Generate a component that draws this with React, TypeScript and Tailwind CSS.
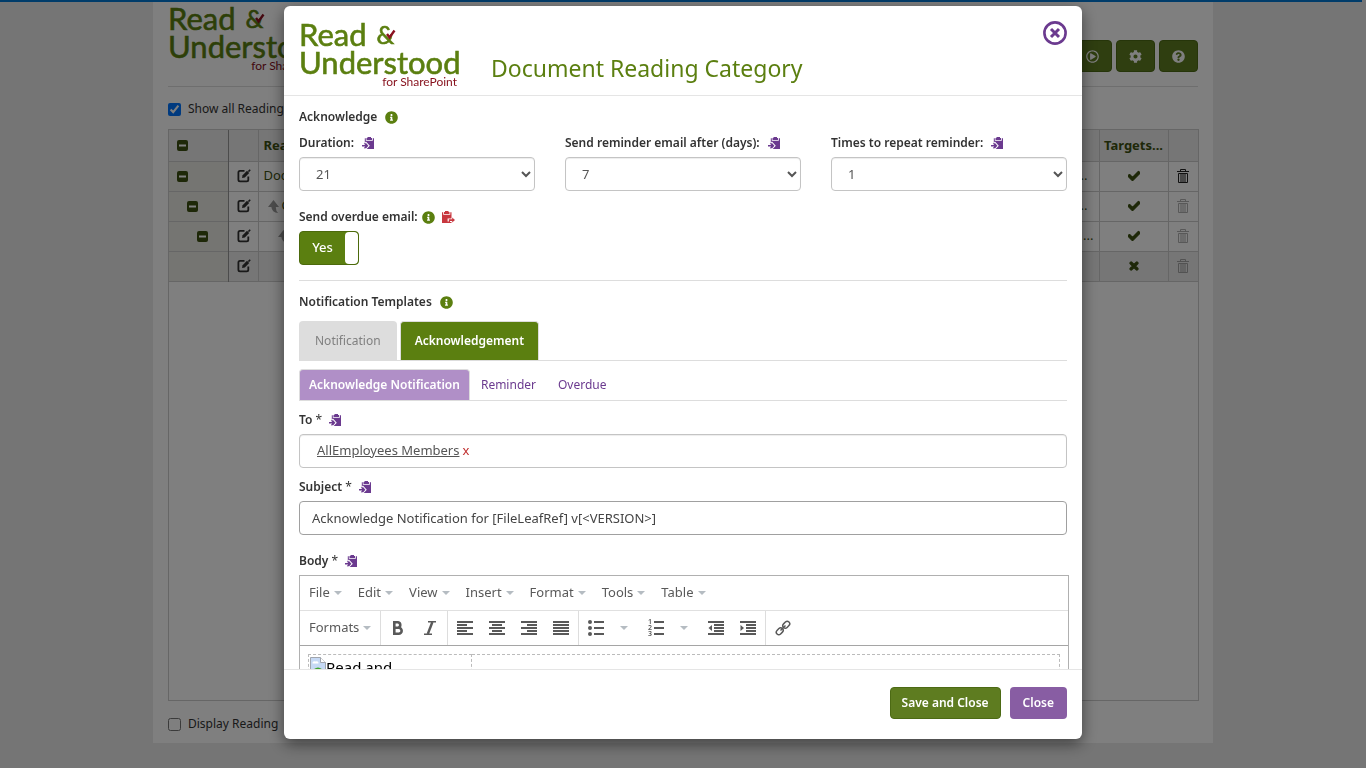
import { useState } from "react";
import type { ReactNode } from "react";
import {
  FaCheck,
  FaCog,
  FaInfoCircle,
  FaQuestionCircle,
  FaRegPlayCircle,
  FaTimes,
} from "react-icons/fa";

type Row = {
  id: number;
  indent: string;
  name: string;
  more: string;
  expand: boolean;
  targets: boolean;
  canDelete: boolean;
};

const rows: Row[] = [
  { id: 1, indent: "pl-2", name: "Document", more: "...", expand: true, targets: true, canDelete: true },
  { id: 2, indent: "pl-[18px]", name: "C", more: "...", expand: true, targets: true, canDelete: false },
  { id: 3, indent: "pl-7", name: "", more: "...", expand: true, targets: true, canDelete: false },
  { id: 4, indent: "pl-2", name: "", more: "", expand: false, targets: false, canDelete: false },
];

const menus = ["File", "Edit", "View", "Insert", "Format", "Tools", "Table"];

const Logo = () => (
  <div className="relative h-[72px] w-[162px] shrink-0 pt-0.5 font-[Lato,sans-serif] text-[#5b7f10]">
    <div className="text-[31px] leading-7 font-normal [-webkit-text-stroke:0.6px_currentColor]">
      <div className="flex gap-2.5">
        <span>Read</span>
        <span className="relative text-[25px]">
          &amp;
          <svg className="absolute top-2 left-2 h-3 w-3" viewBox="0 0 12 12">
            <path d="M2 6l2.500 3.500 5-7" fill="none" stroke="#8b1020" strokeWidth="2.4" />
          </svg>
        </span>
      </div>
      <div>Understood</div>
    </div>
    <div className="absolute right-1 bottom-0.5 text-[12px] leading-3 font-normal text-[#86101c]">for SharePoint</div>
  </div>
);

const InfoIcon = () => <FaInfoCircle className="h-[13px] w-[13px] text-[#5b7f10]" />;

const PasteIcon = () => (
  <svg className="h-3 w-3" viewBox="0 0 12 12" fill="#6b3a8f">
    <path d="M5.500 0h3.500v1h1v2H4.500V1h1z" />
    <path d="M2.800 1.200h1v2.500h7V1.200H12V12H2.800z" />
    <path d="M-.5 8.700h5M3 5.500l3 3.200-3 3.200" fill="none" stroke="#fff" strokeWidth="2.600" />
    <path d="M0 8h3.200L1.800 6.200h2.400l2.200 2.500-2.200 2.500H1.800l1.400-1.800H0z" />
  </svg>
);

const CopyIcon = () => (
  <svg className="h-3 w-[13px]" viewBox="0 0 13 12" fill="#c8373f">
    <path d="M3 0h3.500v1h1v2H2V1h1z" />
    <path d="M0 1.200h1.200v2.500h7.100V1.200h1.200V12H0z" />
    <path d="M7.400 10.500V9.300h4" fill="none" stroke="#fff" strokeWidth="3.600" />
    <path d="M6.800 8.300h3.400V6.600L13 9.100l-2.800 2.500V9.900H8v1H6.800z" />
  </svg>
);

const EditIcon = () => (
  <svg className="h-3.5 w-3.5" viewBox="0 0 14 14" fill="none" stroke="#333" strokeWidth="1.8">
    <path d="M7.5 1.9H3Q1.4 1.9 1.4 3.5v7.2Q1.4 12.3 3 12.3h6.7q1.6 0 1.6-1.6V7.4" />
    <path d="M5 9l.6-2.800L10 1.800l2.200 2.200L7.800 8.400z" fill="#333" stroke="none" />
    <path d="M11.400 2.600l1.800-1.800" strokeWidth="1.600" />
  </svg>
);

const MinusIcon = () => (
  <svg className="h-[11px] w-[11px]" viewBox="0 0 11 11">
    <rect width="11" height="11" rx="2" fill="#3c5010" />
    <rect x="2" y="4.5" width="7" height="2" fill="#fff" />
  </svg>
);

const TrashIcon = ({ faded }: { faded: boolean }) => (
  <svg
    className={faded ? "h-3.5 w-3 opacity-35" : "h-3.5 w-3"}
    viewBox="0 0 12 14"
    fill="none"
    stroke="#222"
  >
    <path d="M0 2.5h12M3.500 2V.5h5V2M1.500 4.500v9h9v-9z" />
    <path d="M4 5v8M6 5v8M8 5v8" />
  </svg>
);

const UpIcon = () => (
  <svg className="h-[13px] w-[11px]" viewBox="0 0 11 13" fill="#999">
    <path d="M5.500 0L11 7H7.800q0 4 2.400 6Q3.800 12.500 3.400 7H0z" />
  </svg>
);

const Bars = ({ lines }: { lines: number[][] }) => (
  <>
    {lines.map(([x, y, w]) => (
      <rect key={y} x={x} y={y} width={w} height="2" />
    ))}
  </>
);

const ToolButton = ({ label, children }: { label: string; children: ReactNode }) => (
  <button aria-label={label} className="flex h-8 w-8 items-center justify-center text-[#595959]">
    {children}
  </button>
);

const ToolIcon = ({ children }: { children: ReactNode }) => (
  <svg className="h-3.5 w-4" viewBox="0 0 16 14" fill="currentColor">
    {children}
  </svg>
);

const Caret = () => (
  <svg className="h-1 w-2" viewBox="0 0 8 4" fill="#b5bcc2">
    <path d="M0 0h8L4 4z" />
  </svg>
);

const ListCaret = ({ label }: { label: string }) => (
  <button aria-label={label} className="flex h-8 w-6 items-center justify-center">
    <Caret />
  </button>
);

const SelectField = ({ id, label, value }: { id: string; label: string; value: string }) => (
  <div className="min-w-0 flex-1">
    <div className="flex h-5 items-center gap-2">
      <label htmlFor={id}>{label}</label>
      <PasteIcon />
    </div>
    <select
      id={id}
      defaultValue={value}
      className="mt-1 h-[34px] w-full rounded border border-[#c4c4c4] bg-white px-3 text-[13px] font-normal text-[#555] shadow-[inset_0_1px_1px_rgba(0,0,0,0.075)]"
    >
      <option>{value}</option>
    </select>
  </div>
);

const Required = ({ id, label }: { id: string; label: string }) => (
  <div className="flex h-5 items-center gap-[7px]">
    <label htmlFor={id}>
      {label} <span className="font-normal">*</span>
    </label>
    <PasteIcon />
  </div>
);

const Page = () => {
  const [showAll, setShowAll] = useState(true);

  return (
    <main className="mx-auto flex h-[741px] max-w-[1060px] flex-col bg-white px-[15px] text-[12px] text-[#333]">
      <header className="flex h-[85px] shrink-0 justify-between border-b border-[#ddd]">
        <Logo />
        <div className="mt-[38px] flex gap-1">
          {[
            { label: "Run", icon: <FaRegPlayCircle /> },
            { label: "Settings", icon: <FaCog /> },
            { label: "Help", icon: <FaQuestionCircle /> },
          ].map((item) => (
            <button
              key={item.label}
              aria-label={item.label}
              className="flex h-8 w-[39px] items-center justify-center rounded border border-[#4c6a14] bg-[#5e7c20] text-[13px] text-white"
            >
              {item.icon}
            </button>
          ))}
        </div>
      </header>

      <label className="mt-3 flex h-5 items-center gap-[7px]">
        <input
          type="checkbox"
          className="h-[13px] w-[13px] accent-[#0075ff]"
          checked={showAll}
          onChange={(e) => setShowAll(e.target.checked)}
        />
        Show all Reading
      </label>

      {/* category grid */}
      <div className="mt-2.5 -mr-px min-h-0 flex-1 border border-[#ccc] text-[13px]">
        <table className="w-full table-fixed border-collapse">
          <colgroup>
            <col className="w-[59px]" />
            <col className="w-[30px]" />
            <col />
            <col className="w-[70px]" />
            <col className="w-[69px]" />
            <col className="w-[30px]" />
          </colgroup>
          <thead>
            <tr className="h-[31px] border-b border-[#ccc] bg-[#ededed] text-left text-[#3c5010]">
              <th className="border-r border-[#999] pl-2">
                <MinusIcon />
              </th>
              <th className="border-r border-[#ccc]" />
              <th className="pl-[5px]">Reading</th>
              <th className="border-r border-[#ccc]" />
              <th className="border-r border-[#ccc] text-center">Targets...</th>
              <th />
            </tr>
          </thead>
          <tbody>
            {rows.map((row) => (
              <tr
                key={row.id}
                className={
                  row.expand ? "h-[30px] border-b border-[#ccc]" : "h-[30px] border-b border-[#ccc] bg-[#ededed]"
                }
              >
                <td className={"border-r border-[#999] bg-[#ebebe4] " + row.indent}>
                  {row.expand && <MinusIcon />}
                </td>
                <td className="border-r border-[#ccc] pl-2">
                  <EditIcon />
                </td>
                <td className="pl-[5px] text-[#3c5010]">
                  <div className="flex items-center gap-[3px]">
                    {row.id === 2 && <span className="pl-1"><UpIcon /></span>}
                    {row.id === 3 && <span className="pl-3.5"><UpIcon /></span>}
                    {row.name}
                  </div>
                </td>
                <td
                  className={
                    row.id === 3
                      ? "border-r border-[#ccc] pr-[5px] text-right text-[#3c5010]"
                      : "border-r border-[#ccc] pr-[11px] text-right text-[#3c5010]"
                  }
                >
                  {row.more}
                </td>
                <td className="border-r border-[#ccc] text-[#3c5010]">
                  <div className="flex justify-center text-[12px] *:stroke-current *:stroke-50">
                    {row.targets ? <FaCheck /> : <FaTimes />}
                  </div>
                </td>
                <td>
                  <div className="flex justify-center">
                    <TrashIcon faded={!row.canDelete} />
                  </div>
                </td>
              </tr>
            ))}
          </tbody>
        </table>
      </div>

      <label className="mt-[13px] mb-[9px] flex h-5 items-center gap-[7px]">
        <input type="checkbox" className="h-[13px] w-[13px]" />
        Display Reading
      </label>
    </main>
  );
};

const Editor = () => (
  <div className="mt-1 -mr-0.5 border border-[#b0b0b0] text-[13px] font-normal text-[#595959]">
    <div className="flex h-[35px] items-center gap-4 border-b border-[#e0e0e0] pl-[9px]">
      {menus.map((menu) => (
        <button key={menu} className="flex items-center gap-1">
          {menu}
          <Caret />
        </button>
      ))}
    </div>
    <div className="flex h-[35px] items-stretch border-b border-[#a5a5a5] *:flex *:items-center *:border-r *:border-[#ddd]">
      <div className="pr-[9px] pl-[9px]">
        <button className="flex items-center gap-1">
          Formats
          <Caret />
        </button>
      </div>
      <div className="px-px">
        <ToolButton label="Bold">
          <svg className="h-3.5 w-3" viewBox="0 0 12 14" fill="none" stroke="currentColor" strokeWidth="2.6">
            <path d="M2.3 1.3H6a2.8 2.8 0 0 1 0 5.5H2.3zM2.3 6.8h4.4a2.9 2.9 0 0 1 0 5.9H2.3z" />
          </svg>
        </ToolButton>
        <ToolButton label="Italic">
          <svg className="h-3.5 w-3" viewBox="0 0 12 14" fill="none" stroke="currentColor">
            <path d="M4 .8h8M0 13.2h8" strokeWidth="1.4" />
            <path d="M8.4 1L3.8 13" strokeWidth="2.4" />
          </svg>
        </ToolButton>
      </div>
      <div className="px-px">
        <ToolButton label="Align left">
          <ToolIcon><Bars lines={[[0, 0, 16], [0, 3, 10], [0, 6, 16], [0, 9, 10], [0, 12, 16]]} /></ToolIcon>
        </ToolButton>
        <ToolButton label="Align center">
          <ToolIcon><Bars lines={[[0, 0, 16], [3, 3, 10], [0, 6, 16], [3, 9, 10], [0, 12, 16]]} /></ToolIcon>
        </ToolButton>
        <ToolButton label="Align right">
          <ToolIcon><Bars lines={[[0, 0, 16], [6, 3, 10], [0, 6, 16], [6, 9, 10], [0, 12, 16]]} /></ToolIcon>
        </ToolButton>
        <ToolButton label="Justify">
          <ToolIcon><Bars lines={[[0, 0, 16], [0, 3, 16], [0, 6, 16], [0, 9, 16], [0, 12, 16]]} /></ToolIcon>
        </ToolButton>
      </div>
      <div className="gap-1 px-px">
        <div className="flex items-center">
          <ToolButton label="Bullet list">
            <svg className="h-4 w-4" viewBox="0 0 16 16" fill="currentColor">
              <Bars lines={[[6, 1, 10], [6, 7, 10], [6, 13, 10]]} />
              <circle cx="2" cy="2" r="2" />
              <circle cx="2" cy="8" r="2" />
              <circle cx="2" cy="14" r="2" />
            </svg>
          </ToolButton>
          <ListCaret label="Bullet styles" />
        </div>
        <div className="flex items-center">
          <ToolButton label="Numbered list">
            <svg className="h-4 w-4 overflow-visible" viewBox="0 0 16 16" fill="currentColor">
              <Bars lines={[[6, 1, 10], [6, 7, 10], [6, 13, 10]]} />
              <g fontSize="7" fontWeight="600">
                <text x="0" y="4">1</text>
                <text x="0" y="10">2</text>
                <text x="0" y="16">3</text>
              </g>
            </svg>
          </ToolButton>
          <ListCaret label="Number styles" />
        </div>
        <div className="flex items-center">
          <ToolButton label="Outdent">
            <ToolIcon>
              <Bars lines={[[0, 0, 16], [6, 3, 10], [6, 6, 10], [6, 9, 10], [0, 12, 16]]} />
              <path d="M4 4v6L.5 7z" />
            </ToolIcon>
          </ToolButton>
          <ToolButton label="Indent">
            <ToolIcon>
              <Bars lines={[[0, 0, 16], [6, 3, 10], [6, 6, 10], [6, 9, 10], [0, 12, 16]]} />
              <path d="M.5 4v6L4 7z" />
            </ToolIcon>
          </ToolButton>
        </div>
      </div>
      <div className="border-r-0! px-px">
        <ToolButton label="Insert link">
          <svg className="h-4 w-4" viewBox="0 0 16 16" fill="none" stroke="currentColor" strokeWidth="1.5">
            <rect x="-3.6" y="-2.5" width="7.6" height="5" rx="2.5" transform="translate(4.6 11.4) rotate(-45)" />
            <rect x="-4" y="-2.5" width="7.6" height="5" rx="2.5" transform="translate(11.4 4.6) rotate(-45)" />
            <path d="M5.5 10.5l5-5" />
          </svg>
        </ToolButton>
      </div>
    </div>
    <div className="p-2">
      <table className="w-full table-fixed border-collapse text-[15px] text-black">
        <tbody>
          <tr className="h-24 align-top">
            <td className="w-[163px] border border-dashed border-[#bbb] px-px pt-0.5 leading-5">
              <svg className="inline h-4 w-4 align-top" viewBox="0 0 16 16">
                <path d="M.5.5h10l5 5v10H.5z" fill="#c6d9f5" stroke="#a0a5ad" />
                <path d="M10.500.5v5h5" fill="#fff" stroke="#a0a5ad" />
                <path d="M2.500 6.500a2 2 0 0 1 3-2 2 2 0 0 1 3 2z" fill="#fff" />
                <path d="M3 13q5-5 10 0v3H3z" fill="#3fa52e" />
              </svg>
              Read and
            </td>
            <td className="border border-dashed border-[#bbb]" />
          </tr>
        </tbody>
      </table>
    </div>
  </div>
);

const App = () => {
  const [overdue, setOverdue] = useState(true);
  const [subject, setSubject] = useState("Acknowledge Notification for [FileLeafRef] v[<VERSION>]");

  return (
    <div className="h-screen overflow-hidden bg-[#ebebeb] font-['Noto_Sans',sans-serif]">
      <div className="mr-1 h-0.5 bg-[#0078d4]" />
      <Page />

      <div className="fixed inset-0 bg-black/50 pt-1.5">
        <div
          role="dialog"
          aria-labelledby="dialog-title"
          className="mx-auto flex h-[calc(100vh-35px)] max-w-[798px] flex-col rounded-md bg-white text-[12px] font-semibold text-[#333] shadow-[0_5px_15px_rgba(0,0,0,0.5)]"
        >
          {/* heading */}
          <div className="flex h-[90px] shrink-0 border-b border-[#e5e5e5] px-[15px] pt-3">
            <Logo />
            <h1 id="dialog-title" className="mt-[34px] ml-[30px] flex-1 text-[23px] leading-8 font-normal text-[#5b7f10]">
              Document Reading Category
            </h1>
            <button aria-label="Close dialog" className="mt-[3px] h-6 w-6">
              <svg viewBox="0 0 24 24" fill="none" stroke="#6b3a8f">
                <circle cx="12" cy="12" r="10.600" strokeWidth="2.600" />
                <path d="M8 8l8 8M16 8l-8 8" strokeWidth="3" />
              </svg>
            </button>
          </div>

          <div className="min-h-0 flex-1 overflow-hidden px-[15px] pt-[11px]">
            <div className="flex h-5 items-center gap-2">
              Acknowledge <InfoIcon />
            </div>

            <div className="mt-1.5 flex gap-[30px]">
              <SelectField id="duration" label="Duration:" value="21" />
              <SelectField id="remind" label="Send reminder email after (days):" value="7" />
              <SelectField id="repeat" label="Times to repeat reminder:" value="1" />
            </div>

            <div className="mt-4 flex h-5 items-center">
              <label htmlFor="overdue" className="mr-1">Send overdue email:</label>
              <InfoIcon />
              <span className="ml-[7px]"><CopyIcon /></span>
            </div>
            <button
              id="overdue"
              onClick={() => setOverdue((prev) => !prev)}
              className="mt-1 flex h-[34px] w-[60px] overflow-hidden rounded border border-[#4c6a0c] bg-[#5b7f10] text-[13px] font-medium text-white"
            >
              <span className="flex-1 self-center">{overdue ? "Yes" : "No"}</span>
              <span className="h-full w-[13px] rounded bg-white" />
            </button>

            <hr className="mt-[15px] border-[#ddd]" />

            <div className="mt-[11px] flex h-5 items-center gap-2">
              Notification Templates <InfoIcon />
            </div>

            {/* tabs */}
            <div className="mt-[9px] flex h-10 gap-[3px] border-b border-[#ddd]">
              <button className="rounded-t bg-[#ddd] px-4 font-normal text-[#808080]">Notification</button>
              <button className="rounded-t border border-b-0 border-[#ddd] bg-[#5b7f10] px-[14px] text-white">
                Acknowledgement
              </button>
            </div>
            <div className="mt-2 flex h-8 border-b border-[#ddd] font-normal text-[#6b3a8f]">
              <button className="rounded-t border border-b-0 border-[#ddd] bg-[#b08fc7] px-[9px] font-semibold text-white">
                Acknowledge Notification
              </button>
              <button className="px-[11px]">Reminder</button>
              <button className="px-[11px]">Overdue</button>
            </div>

            <div className="mt-[9px]">
              <Required id="to" label="To" />
              <div className="mt-1 flex h-[34px] items-center rounded border border-[#c4c4c4] pl-[17px] text-[13px] font-normal text-[#555] shadow-[inset_0_1px_1px_rgba(0,0,0,0.075)]">
                <span className="underline">AllEmployees Members</span>
                <button aria-label="Remove" className="ml-[3px] text-[#c03030]">x</button>
                <input id="to" className="min-w-0 flex-1 outline-none" />
              </div>
            </div>

            <div className="mt-[9px]">
              <Required id="subject" label="Subject" />
              <input
                id="subject"
                value={subject}
                onChange={(e) => setSubject(e.target.value)}
                className="mt-1 h-[34px] w-full rounded border border-[#a0a0a0] px-3 text-[13px] font-normal text-[#444]"
              />
            </div>

            <div className="mt-4">
              <Required id="body" label="Body" />
              <div id="body">
                <Editor />
              </div>
            </div>
          </div>

          <div className="flex h-[70px] shrink-0 justify-end gap-[9px] border-t border-[#e5e5e5] px-[15px] pt-[17px] text-white">
            <button className="h-8 rounded border border-[#4c6a14] bg-[#5e7c20] px-[11px]">Save and Close</button>
            <button className="h-8 rounded bg-[#885da3] px-[13px]">Close</button>
          </div>
        </div>
      </div>
    </div>
  );
};

export default App;
